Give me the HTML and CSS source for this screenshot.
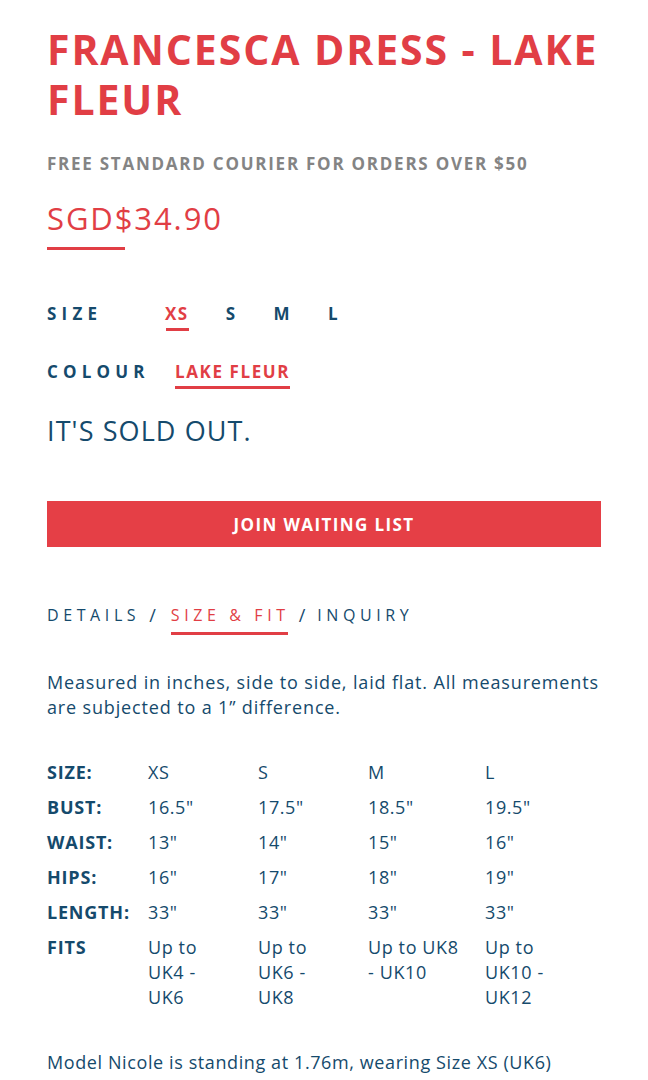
FILE: index.html
```html
<!DOCTYPE html>
<html>
<head>
<meta charset="utf-8">
<link rel="stylesheet" href="styles.css">
</head>
<body>
<main class="product">
  <h1 class="title">FRANCESCA DRESS - LAKE FLEUR</h1>
  <p class="shipping">FREE STANDARD COURIER FOR ORDERS OVER $50</p>
  <div class="price">SGD$34.90</div>

  <div class="option-row size-row">
    <span class="opt-label">SIZE</span>
    <div class="sizes">
      <span class="size active">XS</span>
      <span class="size">S</span>
      <span class="size">M</span>
      <span class="size">L</span>
    </div>
  </div>
  <div class="option-row colour-row">
    <span class="opt-label">COLOUR</span>
    <span class="colour active">LAKE FLEUR</span>
  </div>

  <div class="soldout">IT'S SOLD OUT.</div>

  <button class="waitlist">JOIN WAITING LIST</button>

  <nav class="tabs">
    <span class="tab">DETAILS</span>
    <span class="sep sep-first">/</span>
    <span class="tab active">SIZE &amp; FIT</span>
    <span class="sep">/</span>
    <span class="tab">INQUIRY</span>
  </nav>

  <p class="note">Measured in inches, side to side, laid flat. All measurements are subjected to a 1” difference.</p>

  <table class="chart">
    <tr><th>SIZE:</th><td>XS</td><td>S</td><td>M</td><td>L</td></tr>
    <tr><th>BUST:</th><td>16.5"</td><td>17.5"</td><td>18.5"</td><td>19.5"</td></tr>
    <tr><th>WAIST:</th><td>13"</td><td>14"</td><td>15"</td><td>16"</td></tr>
    <tr><th>HIPS:</th><td>16"</td><td>17"</td><td>18"</td><td>19"</td></tr>
    <tr><th>LENGTH:</th><td>33"</td><td>33"</td><td>33"</td><td>33"</td></tr>
    <tr><th>FITS</th><td>Up to<br>UK4 -<br>UK6</td><td>Up to<br>UK6 -<br>UK8</td><td>Up to UK8<br>- UK10</td><td>Up to<br>UK10 -<br>UK12</td></tr>
  </table>

  <p class="model">Model Nicole is standing at 1.76m, wearing Size XS (UK6)</p>
</main>
</body>
</html>
```

FILE: styles.css
```css
* { box-sizing: border-box; }
html, body { margin: 0; padding: 0; background: #fff; }
body {
  font-family: "Open Sans", "DejaVu Sans", sans-serif;
  color: #154a6c;
}
.product {
  width: 554px;
  margin-left: 47px;
  padding-top: 24px;
}
.title {
  margin: 0;
  font-size: 41px;
  line-height: 50px;
  font-weight: 700;
  color: #e13e45;
  letter-spacing: 1.9px;
}
.shipping {
  margin: 28px 0 0;
  font-size: 17px;
  line-height: 24px;
  font-weight: 700;
  color: #848484;
  letter-spacing: 1.75px;
}
.price {
  margin-top: 22px;
  display: inline-block;
  font-size: 31px;
  line-height: 40px;
  color: #e13e45;
  letter-spacing: 1.9px;
  position: relative;
  padding-bottom: 12px;
}
.price::after {
  content: "";
  position: absolute;
  left: 0;
  bottom: 0;
  width: 78px;
  height: 3px;
  background: #e13e45;
}
.option-row {
  display: flex;
  align-items: center;
  font-weight: 700;
  font-size: 17px;
}
.size-row { margin-top: 48px; height: 30px; }
.colour-row { margin-top: 28px; height: 30px; }
.opt-label {
  letter-spacing: 5.2px;
  color: #154a6c;
}
.size-row .opt-label { width: 118px; }
.colour-row .opt-label { width: 128px; }
.sizes { display: flex; gap: 37px; }
.size { letter-spacing: 1.5px; }
.size, .colour { position: relative; }
.colour { letter-spacing: 1.6px; }
.active { color: #e13e45; }
.size.active::after, .colour.active::after, .tab.active::after {
  content: "";
  position: absolute;
  left: 0;
  right: 0;
  bottom: -6px;
  height: 3px;
  background: #e13e45;
}
.size.active::after { right: 0; left: 1px; }
.soldout {
  margin-top: 27px;
  font-size: 27px;
  line-height: 36px;
  color: #154a6c;
  letter-spacing: 1.1px;
}
.waitlist {
  display: block;
  width: 554px;
  height: 46px;
  margin-top: 52px;
  border: 0;
  background: #e53f46;
  color: #fff;
  font-family: inherit;
  font-size: 17px;
  font-weight: 700;
  letter-spacing: 1.4px;
}
.tabs {
  margin-top: 56px;
  display: flex;
  align-items: center;
  font-size: 16px;
  letter-spacing: 4.6px;
  color: #154a6c;
}
.tab { position: relative; }
.tab.active::after { bottom: -9px; right: 2px; }
.sep { margin: 0 12px 0 9px; letter-spacing: 0; font-size: 18px; }
.sep-first { margin-right: 15px; }
.note {
  margin: 43px 0 0;
  font-size: 18px;
  line-height: 25px;
  letter-spacing: 0.85px;
}
.chart {
  margin-top: 40px;
  border-collapse: collapse;
  table-layout: fixed;
  font-size: 18px;
  line-height: 25px;
  letter-spacing: 0.6px;
}
.chart th, .chart td {
  padding: 0 0 10px;
  text-align: left;
  vertical-align: top;
}
.chart th { width: 101px; font-weight: 700; letter-spacing: 0.8px; }
.chart td { width: 110px; font-weight: 400; }
.chart td:nth-child(4) { width: 117px; }
.chart td:last-child { width: 116px; }
.model {
  margin: 30px 0 0;
  font-size: 18px;
  line-height: 25px;
  letter-spacing: 0.6px;
}
```
